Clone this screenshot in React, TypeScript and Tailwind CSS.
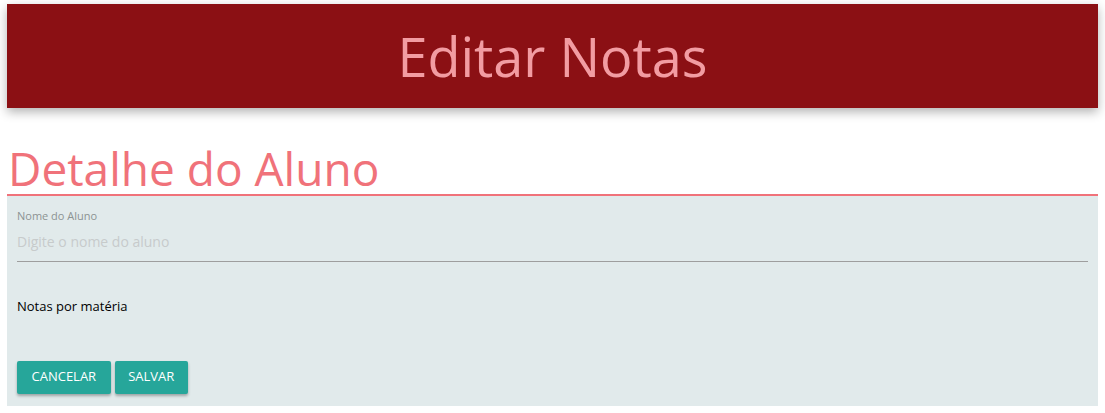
const App = () => {
  return (
    <div className="min-h-screen bg-white px-[7px] pt-1 font-['Open_Sans',sans-serif]">
      {/* Header */}
      <header className="flex h-[104px] items-center justify-center bg-[#8b1014] shadow-[0_4px_10px_rgba(0,0,0,0.3)]">
        <h1 className="text-[54px] leading-none text-[#f29ca2]">Editar Notas</h1>
      </header>

      {/* Title */}
      <h2 className="mt-[34px] border-b-2 border-[#f0727a] pl-px text-[46px] leading-[52px] text-[#f0727a]">
        Detalhe do Aluno
      </h2>

      {/* Form panel */}
      <div className="bg-[#e1eaeb] px-[10px] pt-[12px] pb-[12px]">
        <label className="block text-[11px] leading-4 text-[#8c9393]">Nome do Aluno</label>
        <input
          placeholder="Digite o nome do aluno"
          className="block h-[38px] w-full border-b border-[#9e9e9e] pb-[3px] bg-transparent text-[14px] outline-none placeholder:text-[#c7cbcb]"
        />
        <p className="mt-[35px] text-[13px] text-black">Notas por matéria</p>
        <div className="mt-[44px] flex gap-1">
          <button className="h-[33px] rounded-[2px] bg-[#26a69a] px-[14.5px] text-[13px] text-white uppercase shadow-[0_2px_3px_rgba(0,0,0,0.3)]">
            Cancelar
          </button>
          <button className="h-[33px] rounded-[2px] bg-[#26a69a] px-[13.5px] text-[13px] text-white uppercase shadow-[0_2px_3px_rgba(0,0,0,0.3)]">
            Salvar
          </button>
        </div>
      </div>
    </div>
  );
};

export default App;
